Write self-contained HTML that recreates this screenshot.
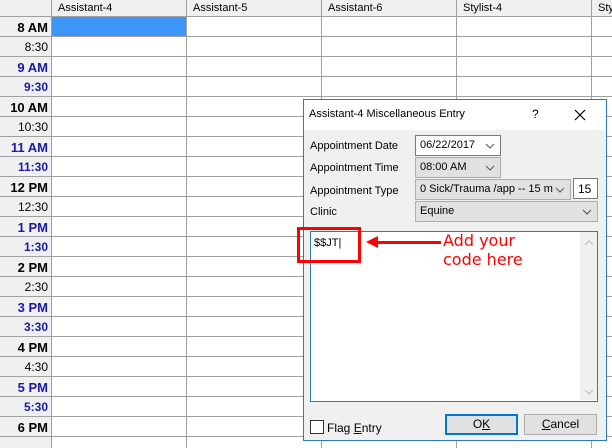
<!DOCTYPE html><html><head><style>
body{margin:0;width:612px;height:448px;overflow:hidden;background:#fff;font-family:"Liberation Sans",sans-serif;position:relative}
.a{position:absolute}
.hl{position:absolute;left:0;width:612px;height:1px;background:#a0a0a0}
.vl{position:absolute;top:0;height:448px;width:1px;background:#a0a0a0}
.t{position:absolute;left:0;width:48px;text-align:right;font-size:12px;font-weight:bold}
.h{position:absolute;top:2px;font-size:11px}
.lab{position:absolute;left:310px;font-size:11px}
.box{position:absolute;border:1px solid #adadad;font-size:11px;box-sizing:border-box;padding:3px 4px;height:21px;overflow:hidden;white-space:nowrap}
.chev{position:absolute;right:5px;top:7px;width:10px;height:6px;background:inherit}
</style></head><body>
<div class="a" style="left:0;top:0;width:51px;height:448px;background:#f0f0f0"></div>
<div class="a" style="left:0;top:0;width:612px;height:16px;background:#f0f0f0"></div>
<div class="a" style="left:52px;top:17px;width:134px;height:19px;background:#3d95f5"></div>
<div class="hl" style="top:16px"></div>
<div class="hl" style="top:36px"></div><div class="hl" style="top:56px"></div><div class="hl" style="top:76px"></div><div class="hl" style="top:96px"></div><div class="hl" style="top:116px"></div><div class="hl" style="top:136px"></div><div class="hl" style="top:156px"></div><div class="hl" style="top:176px"></div><div class="hl" style="top:196px"></div><div class="hl" style="top:216px"></div><div class="hl" style="top:236px"></div><div class="hl" style="top:256px"></div><div class="hl" style="top:276px"></div><div class="hl" style="top:296px"></div><div class="hl" style="top:316px"></div><div class="hl" style="top:336px"></div><div class="hl" style="top:356px"></div><div class="hl" style="top:376px"></div><div class="hl" style="top:396px"></div><div class="hl" style="top:416px"></div><div class="hl" style="top:436px"></div>
<div class="vl" style="left:51px"></div><div class="vl" style="left:186px"></div><div class="vl" style="left:321px"></div><div class="vl" style="left:456px"></div><div class="vl" style="left:591px"></div>
<div class="h" style="left:58px">Assistant-4</div><div class="h" style="left:193px">Assistant-5</div><div class="h" style="left:328px">Assistant-6</div><div class="h" style="left:463px">Stylist-4</div><div class="h" style="left:598px">Styl</div>
<div class="t" style="top:20px;font-size:13px">8 AM</div>
<div class="t" style="top:40px;font-weight:normal">8:30</div>
<div class="t" style="top:60px;font-size:13px;color:#1a1aa8">9 AM</div>
<div class="t" style="top:80px;color:#1a1aa8">9:30</div>
<div class="t" style="top:100px;font-size:13px">10 AM</div>
<div class="t" style="top:120px;font-weight:normal">10:30</div>
<div class="t" style="top:140px;font-size:13px;color:#1a1aa8">11 AM</div>
<div class="t" style="top:160px;color:#1a1aa8">11:30</div>
<div class="t" style="top:180px;font-size:13px">12 PM</div>
<div class="t" style="top:200px;font-weight:normal">12:30</div>
<div class="t" style="top:220px;font-size:13px;color:#1a1aa8">1 PM</div>
<div class="t" style="top:240px;color:#1a1aa8">1:30</div>
<div class="t" style="top:260px;font-size:13px">2 PM</div>
<div class="t" style="top:280px;font-weight:normal">2:30</div>
<div class="t" style="top:300px;font-size:13px;color:#1a1aa8">3 PM</div>
<div class="t" style="top:320px;color:#1a1aa8">3:30</div>
<div class="t" style="top:340px;font-size:13px">4 PM</div>
<div class="t" style="top:360px;font-weight:normal">4:30</div>
<div class="t" style="top:380px;font-size:13px;color:#1a1aa8">5 PM</div>
<div class="t" style="top:400px;color:#1a1aa8">5:30</div>
<div class="t" style="top:420px;font-size:13px">6 PM</div>
<!-- dialog -->
<div class="a" style="left:303px;top:99px;width:302px;height:340px;background:#f0f0f0;border:1px solid #2b79c2"></div>
<div class="a" style="left:304px;top:100px;width:302px;height:30px;background:#fff"></div>
<div class="a" style="left:309px;top:108px;font-size:11px">Assistant-4 Miscellaneous Entry</div>
<div class="a" style="left:532px;top:107px;font-size:12px">?</div>
<svg class="a" style="left:574px;top:109px" width="12" height="12"><path d="M1 1L11 11M11 1L1 11" stroke="#000" stroke-width="1.2"/></svg>
<div class="lab" style="top:140px">Appointment Date</div>
<div class="lab" style="top:162px">Appointment Time</div>
<div class="lab" style="top:185px">Appointment Type</div>
<div class="lab" style="top:206px">Clinic</div>
<div class="box" style="left:415px;top:135px;width:86px;background:#fff;border-color:#7a7a7a">06/22/2017<svg class="chev"><path d="M1 1L5 5L9 1" stroke="#555" fill="none"/></svg></div>
<div class="box" style="left:415px;top:157px;width:86px;background:#e1e1e1">08:00 AM<svg class="chev"><path d="M1 1L5 5L9 1" stroke="#555" fill="none"/></svg></div>
<div class="box" style="left:415px;top:179px;width:156px;background:#e1e1e1">0 Sick/Trauma /app -- 15 m<svg class="chev" style="background:#e1e1e1"><path d="M1 1L5 5L9 1" stroke="#555" fill="none"/></svg></div>
<div class="box" style="left:573px;top:178px;width:25px;background:#fff;border-color:#7a7a7a;font-size:12px">15</div>
<div class="box" style="left:415px;top:201px;width:183px;background:#e1e1e1">Equine<svg class="chev"><path d="M1 1L5 5L9 1" stroke="#555" fill="none"/></svg></div>
<div class="a" style="left:310px;top:231px;width:286px;height:169px;background:#fff;border:1px solid #2b79c2"></div>
<div class="a" style="left:580px;top:232px;width:17px;height:168px;background:#f0f0f0"></div>
<svg class="a" style="left:584px;top:240px" width="10" height="6"><path d="M1 5L5 1L9 5" stroke="#bbb" fill="none"/></svg>
<svg class="a" style="left:584px;top:389px" width="10" height="6"><path d="M1 1L5 5L9 1" stroke="#bbb" fill="none"/></svg>
<div class="a" style="left:314px;top:237px;font-size:11px">$$JT|</div>
<div class="a" style="left:297px;top:227px;width:58px;height:30px;border:3px solid #f00"></div>
<div class="a" style="left:375px;top:241px;width:66px;height:3px;background:#f00"></div>
<div class="a" style="left:366px;top:236px;width:0;height:0;border-top:6px solid transparent;border-bottom:6px solid transparent;border-right:12px solid #f00"></div>
<div class="a" style="left:443px;top:231px;font-size:16px;color:#f00;line-height:19px;font-family:'DejaVu Sans',sans-serif">Add your<br>code here</div>
<div class="a" style="left:310px;top:420px;width:12px;height:12px;border:1px solid #333;background:#fff"></div>
<div class="a" style="left:327px;top:421px;font-size:12px">Flag <u>E</u>ntry</div>
<div class="a" style="left:445px;top:414px;width:71px;height:19px;border:1px solid #0078d7;background:#e1e1e1;font-size:12px;text-align:center;line-height:19px;box-shadow:inset 0 0 0 1px #0078d7">O<u>K</u></div>
<div class="a" style="left:524px;top:414px;width:71px;height:19px;border:1px solid #adadad;background:#e1e1e1;font-size:12px;text-align:center;line-height:19px"><u>C</u>ancel</div>
</body></html>
